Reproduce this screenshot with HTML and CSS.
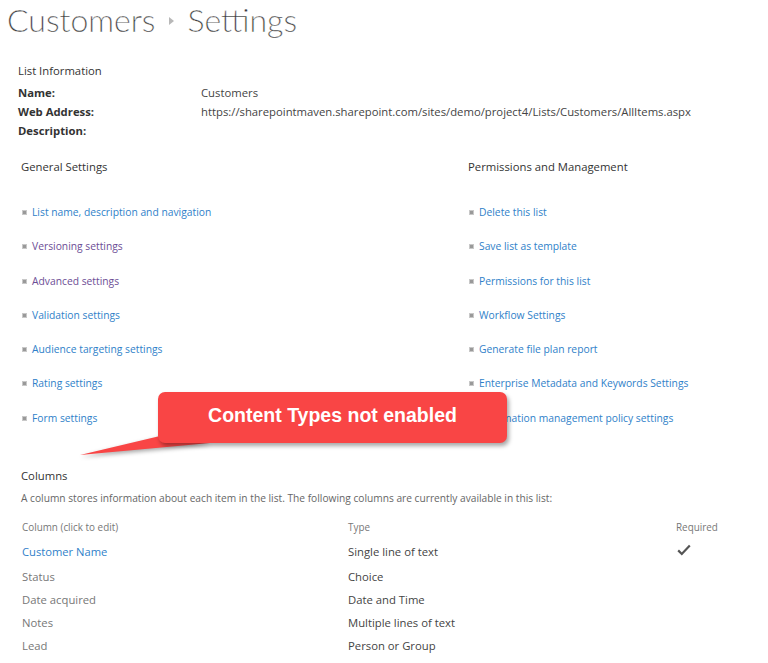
FILE: index.html
```html
<!DOCTYPE html>
<html>
<head>
<meta charset="utf-8">
<link rel="stylesheet" href="styles.css">
</head>
<body>
<div class="page">
  <h1 class="title">Customers<span class="sep"></span>Settings</h1>

  <section class="info">
    <div class="info-head">List Information</div>
    <div class="info-row"><span class="lbl">Name:</span><span class="val">Customers</span></div>
    <div class="info-row"><span class="lbl">Web Address:</span><span class="val">https://sharepointmaven.sharepoint.com/sites/demo/project4/Lists/Customers/AllItems.aspx</span></div>
    <div class="info-row"><span class="lbl">Description:</span><span class="val"></span></div>
  </section>

  <section class="settings">
    <div class="col">
      <div class="sec-head">General Settings</div>
      <ul class="links">
        <li><a>List name, description and navigation</a></li>
        <li><a class="visited">Versioning settings</a></li>
        <li><a class="visited">Advanced settings</a></li>
        <li><a>Validation settings</a></li>
        <li><a>Audience targeting settings</a></li>
        <li><a>Rating settings</a></li>
        <li><a>Form settings</a></li>
      </ul>
    </div>
    <div class="col">
      <div class="sec-head">Permissions and Management</div>
      <ul class="links">
        <li><a>Delete this list</a></li>
        <li><a>Save list as template</a></li>
        <li><a>Permissions for this list</a></li>
        <li><a>Workflow Settings</a></li>
        <li><a>Generate file plan report</a></li>
        <li><a>Enterprise Metadata and Keywords Settings</a></li>
        <li><a>Information management policy settings</a></li>
      </ul>
    </div>
  </section>

  <section class="columns">
    <div class="sec-head">Columns</div>
    <div class="desc">A column stores information about each item in the list. The following columns are currently available in this list:</div>
    <div class="grid">
      <div class="gh">Column (click to edit)</div><div class="gh">Type</div><div class="gh">Required</div>
      <div class="c1 link first">Customer Name</div><div class="c2 first">Single line of text</div><div class="c3 first"><svg class="check" width="14" height="12" viewBox="0 0 14 12"><path d="M1.2 6.4 L4.8 10 L12.8 1.6" fill="none" stroke="#555" stroke-width="2.2"/></svg></div>
      <div class="c1">Status</div><div class="c2">Choice</div><div class="c3"></div>
      <div class="c1">Date acquired</div><div class="c2">Date and Time</div><div class="c3"></div>
      <div class="c1">Notes</div><div class="c2">Multiple lines of text</div><div class="c3"></div>
      <div class="c1">Lead</div><div class="c2">Person or Group</div><div class="c3"></div>
    </div>
  </section>

  <div class="callout">
    <svg class="tail" width="140" height="30" viewBox="0 0 140 30"><polygon points="80,0 0,19 130,7" fill="#f94545"/></svg>
    <div class="bubble">Content Types not enabled</div>
  </div>
</div>
</body>
</html>
```
FILE: styles.css
```css
html, body { margin: 0; padding: 0; background: #fff; }
body { font-family: "Open Sans", "Noto Sans", sans-serif; font-size: 11.3px; color: #444; }
.page { position: relative; width: 768px; height: 663px; overflow: hidden; }

.title {
  margin: 0; padding: 0 0 0 7px;
  font-family: "Lato", "Open Sans", sans-serif;
  font-weight: 300; font-size: 32px; line-height: 40px; color: #333;
  -webkit-text-stroke: 0.35px #fff;
  display: flex; align-items: center; height: 40px;
}
.sep {
  display: inline-block; width: 0; height: 0; margin: 2px 13px 0 14px;
  border-left: 5px solid #b8b8b8; border-top: 4px solid transparent; border-bottom: 4px solid transparent;
}

.info { padding: 21px 0 0 18px; }
.info-head { line-height: 19px; margin-bottom: 3px; color: #333; }
.info-row { display: flex; line-height: 19px; }
.lbl { width: 183px; font-weight: 700; color: #333; }
.val { color: #444; }

.settings { display: flex; padding: 17px 0 0 21px; }
.col { width: 447px; flex: none; }
.col + .col { width: auto; flex: 1; }
.sec-head { color: #333; line-height: 19px; font-size: 11.3px; }
.links { list-style: none; margin: 27px 0 0 0; padding: 0; font-size: 10.3px; }
.links li { height: 34.3px; line-height: 19px; display: flex; align-items: flex-start; }
.links li::before {
  content: ""; width: 3px; height: 3px; background: #999; border: 1px solid #c8c8c8;
  margin: 7px 5px 0 1px; flex: none;
}
.links a { color: #2f7fc9; }
.links a.visited { color: #6c4d95; }

.columns { padding: 23px 0 0 21px; }
.desc { margin-top: 4px; line-height: 19px; color: #666; font-size: 10.2px; }
.grid { display: grid; grid-template-columns: 326px 328px 1fr; margin-top: 10px; padding-left: 1px; }
.gh { font-size: 9.9px; color: #777; line-height: 18px; height: 24px; }
.c1, .c2, .c3 { line-height: 19px; height: 23px; }
.c1 { color: #777; }
.c2 { color: #444; }
.first { height: 25px; }
.link { color: #2f7fc9; font-size: 11.2px; }
.check { margin: 2px 0 0 1px; }

.callout { position: absolute; left: 80px; top: 392px; width: 430px; height: 70px; }
.tail { position: absolute; left: 0; top: 44px; filter: drop-shadow(1px 2px 2px rgba(0,0,0,0.35)); }
.bubble {
  position: absolute; left: 78px; top: 0; width: 349px; height: 51px;
  background: #f94545; border-radius: 7px;
  box-shadow: 2px 3px 4px rgba(0,0,0,0.35);
  color: #fff; font-family: "Liberation Sans", Arial, sans-serif; font-weight: 700; font-size: 19.5px;
  text-align: center; line-height: 47px;
}
```
